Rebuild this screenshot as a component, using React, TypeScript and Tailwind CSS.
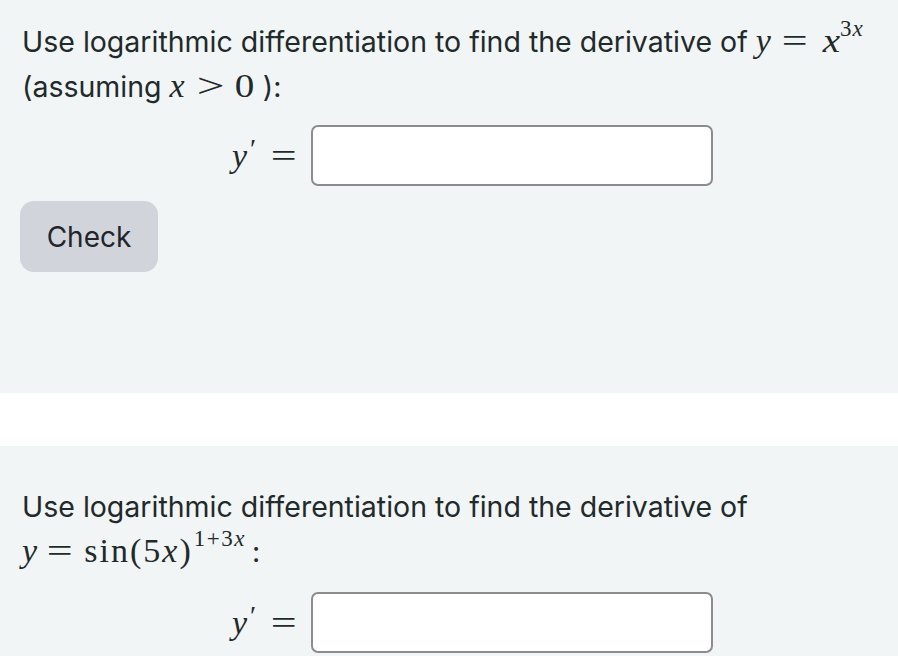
import React from "react";

const M = "font-['Liberation_Serif',serif]";

function V({ children }: { children: React.ReactNode }) {
  return <span className="italic">{children}</span>;
}

function Eq({ cls = "mx-[14px]" }: { cls?: string }) {
  return <span className={`${cls} inline-block scale-x-[1.35] not-italic`}>=</span>;
}

function Answer() {
  return (
    <div className="flex items-center">
      <div className={`${M} text-[34px] leading-none text-[#1f2a2a] pl-[210px] w-[289px] flex items-center`}>
        <V>y</V>
        <span className="ml-[3px] -translate-y-[7px] text-[28px]">′</span>
        <Eq cls="ml-[18px]" />
      </div>
      <div className="w-[402px] h-[61px] rounded-[7px] border-2 border-[#8c8c8c] bg-white" />
    </div>
  );
}

export default function App() {
  return (
    <div className="w-[898px] h-[656px] overflow-hidden bg-white font-['Inter',sans-serif] text-[#1f2a2a]">
      <div className="h-[393px] bg-[#f2f5f6] px-[22px] pt-[19px]">
        <p className="text-[28.5px] leading-[44px] whitespace-nowrap">
          Use logarithmic differentiation to find the derivative of{" "}
          <span className={`${M} text-[34px]`}>
            <V>y</V>
            <Eq cls="ml-[14px] mr-[20px]" />
            <span className="inline-block scale-x-[1.15]">
              <V>x</V>
            </span>
            <sup className="text-[23px] -top-[16px] ml-[1px] tracking-[1px]">
              3<V>x</V>
            </sup>
          </span>
        </p>
        <p className="text-[28.5px] leading-[44px] whitespace-nowrap">
          (assuming{" "}
          <span className={`${M} text-[34px]`}>
            <V>x</V>
            <span className="mx-[16px] inline-block scale-x-[1.45]">&gt;</span>
            <span className="inline-block scale-x-[1.15]">0</span>
          </span>
          <span className="ml-[10px]">):</span>
        </p>
        <div className="mt-[16px]">
          <Answer />
        </div>
        <button className="mt-[15px] ml-[-2px] w-[138px] h-[71px] rounded-[14px] bg-[#d1d5db] text-[28px] text-[#212529]">
          Check
        </button>
      </div>
      <div className="h-[53px] bg-white" />
      <div className="h-[210px] bg-[#f2f5f6] px-[22px] pt-[39px]">
        <p className="text-[28.5px] leading-[44px] whitespace-nowrap">
          Use logarithmic differentiation to find the derivative of
        </p>
        <p className={`${M} text-[34px] leading-[44px] whitespace-nowrap`}>
          <V>y</V>
          <Eq cls="ml-[13px] mr-[15px]" />
          <span className="tracking-[2px]">sin(5</span>
          <V>x</V>
          <span className="ml-[2px]">)</span>
          <sup className="text-[23px] -top-[16px] ml-[3px] tracking-[1.5px]">
            1+3<V>x</V>
          </sup>
          <span className="font-['Inter',sans-serif] text-[28.5px] ml-[6px]">:</span>
        </p>
        <div className="mt-[18px]">
          <Answer />
        </div>
      </div>
    </div>
  );
}
